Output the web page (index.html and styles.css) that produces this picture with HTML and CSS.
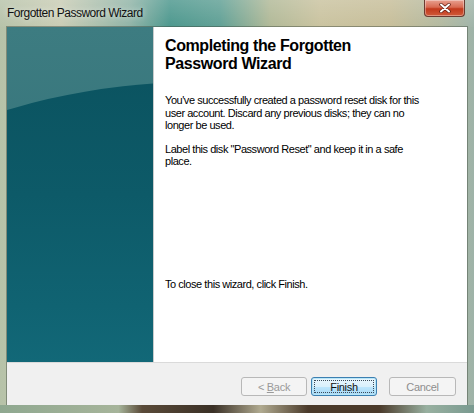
FILE: index.html
```html
<!DOCTYPE html>
<html>
<head>
<meta charset="utf-8">
<link rel="stylesheet" href="styles.css">
</head>
<body>
<div class="window">
  <div class="titlebar">
    <div class="title">Forgotten Password Wizard</div>
    <div class="close">
      <svg width="14" height="10" viewBox="0 0 14 10">
        <path d="M3 1.5 L11 8.5 M11 1.5 L3 8.5" stroke="#5a1a10" stroke-width="3.4" stroke-linecap="round"/>
        <path d="M3 1.5 L11 8.5 M11 1.5 L3 8.5" stroke="#ffffff" stroke-width="2" stroke-linecap="round"/>
      </svg>
    </div>
  </div>
  <div class="client">
    <div class="main">
      <div class="side"><div class="dark"></div></div>
      <div class="content">
        <h1 class="heading">Completing the Forgotten Password Wizard</h1>
        <p class="para">You've successfully created a password reset disk for this user account. Discard any previous disks; they can no longer be used.</p>
        <p class="para">Label this disk "Password Reset" and keep it in a safe place.</p>
        <div class="spacer"></div>
        <p class="para finish-note">To close this wizard, click Finish.</p>
      </div>
    </div>
    <div class="buttons">
      <div class="btn disabled">&lt;&nbsp;<u>B</u>ack</div>
      <div class="btn default"><span class="focus">Finish</span></div>
      <div class="btn cancel">Cancel</div>
    </div>
  </div>
  <div class="bottomframe"></div>
</div>
</body>
</html>
```
FILE: styles.css
```css
html, body {
  margin: 0;
  padding: 0;
}
body {
  width: 474px;
  height: 413px;
  overflow: hidden;
  font-family: "Liberation Sans", Arial, sans-serif;
  background:
    linear-gradient(90deg, #b6c2a8 0px, #c9ccb4 60px, #8fb3a6 130px, #4a968c 170px, #5e9f94 220px, #b0b896 270px, #c9c29e 320px, #c6bd98 390px, #b2b89e 440px, #9eb3a8 474px);
}
.window {
  width: 474px;
  height: 413px;
  display: flex;
  flex-direction: column;
}
.titlebar {
  height: 27px;
  display: flex;
  justify-content: space-between;
  align-items: flex-start;
  background: linear-gradient(180deg, rgba(255,255,255,0.18), rgba(255,255,255,0.02));
}
.title {
  padding: 6px 0 0 7px;
  font-size: 12px;
  letter-spacing: -0.5px;
  color: #111;
  text-shadow: 0 0 6px rgba(255,255,255,0.7);
}
.close {
  width: 41px;
  height: 17px;
  margin-right: 9px;
  box-sizing: border-box;
  border: 1px solid #6b3a30;
  border-top: none;
  border-radius: 0 0 4px 4px;
  background: linear-gradient(180deg, #e8a090 0%, #d86a52 45%, #c2391c 55%, #d05a3a 100%);
  display: flex;
  align-items: center;
  justify-content: center;
  box-shadow: inset 0 0 0 1px rgba(255,255,255,0.35);
}
.close svg { display: block; }
.client {
  margin: 0 7px;
  flex: 1;
  display: flex;
  flex-direction: column;
  box-shadow: 0 0 0 1px rgba(60,70,60,0.45);
}
.main {
  height: 335px;
  display: flex;
}
.side {
  width: 146px;
  position: relative;
  overflow: hidden;
  background: linear-gradient(180deg, #3d7c81 0%, #35737a 60%, #2e6e78 100%);
  border-right: 1px solid #c8cccc;
}
.dark {
  position: absolute;
  left: -206px;
  top: 55px;
  width: 800px;
  height: 448px;
  border-radius: 50%;
  background: linear-gradient(180deg, #0b5461 0%, #0d5a68 25%, #106372 50%, #136b7b 70%, #16717f 100%);
}
.content {
  flex: 1;
  background: #ffffff;
  padding: 10px 42px 0 11px;
  display: flex;
  flex-direction: column;
}
.heading {
  margin: 0 0 21px 0;
  font-size: 16px;
  letter-spacing: -0.4px;
  line-height: 18px;
  font-weight: bold;
  color: #000;
}
.para {
  margin: 0 0 11px 0;
  font-size: 11px;
  letter-spacing: -0.45px;
  line-height: 12.5px;
  color: #000;
}
.spacer { flex: 1; }
.finish-note {
  margin-bottom: 72px;
}
.buttons {
  height: 43px;
  box-sizing: border-box;
  border-top: 1px solid #dadada;
  background: #f0f0f0;
  display: flex;
  justify-content: flex-end;
  align-items: flex-start;
  padding: 14px 11px 0 0;
}
.btn {
  width: 66px;
  height: 19px;
  box-sizing: border-box;
  border: 1px solid #707070;
  border-radius: 3px;
  display: flex;
  align-items: center;
  justify-content: center;
  font-size: 11px;
  letter-spacing: -0.3px;
  color: #000;
  background: linear-gradient(180deg, #f2f2f2 0%, #ebebeb 50%, #dddddd 51%, #cfcfcf 100%);
}
.btn.disabled {
  border-color: #b8b8b8;
  background: #f4f4f4;
  color: #9a9a9a;
  margin-right: 4px;
}
.btn.default {
  border-color: #3c7fb1;
  background: linear-gradient(180deg, #eaf6fd 0%, #d9f0fc 50%, #bee6fd 51%, #a7d9f5 100%);
  box-shadow: inset 0 0 0 1px #b8e6f8;
  margin-right: 12px;
  padding: 2px;
}
.btn.default .focus {
  flex: 1;
  align-self: stretch;
  border: 1px dotted #3a4a58;
  display: flex;
  align-items: center;
  justify-content: center;
  color: #111;
}
.btn.cancel {
  width: 67px;
  border-color: #b8b8b8;
  background: #f4f4f4;
  color: #8e8e8e;
}
.bottomframe {
  height: 8px;
  background: linear-gradient(90deg, #8fa890 0%, #a6b49a 25%, #5a4a38 30%, #3a3026 45%, #b0aa90 55%, #4a3a2a 65%, #4a3a2a 80%, #98b0a0 90%, #7a9a90 100%);
}
```
